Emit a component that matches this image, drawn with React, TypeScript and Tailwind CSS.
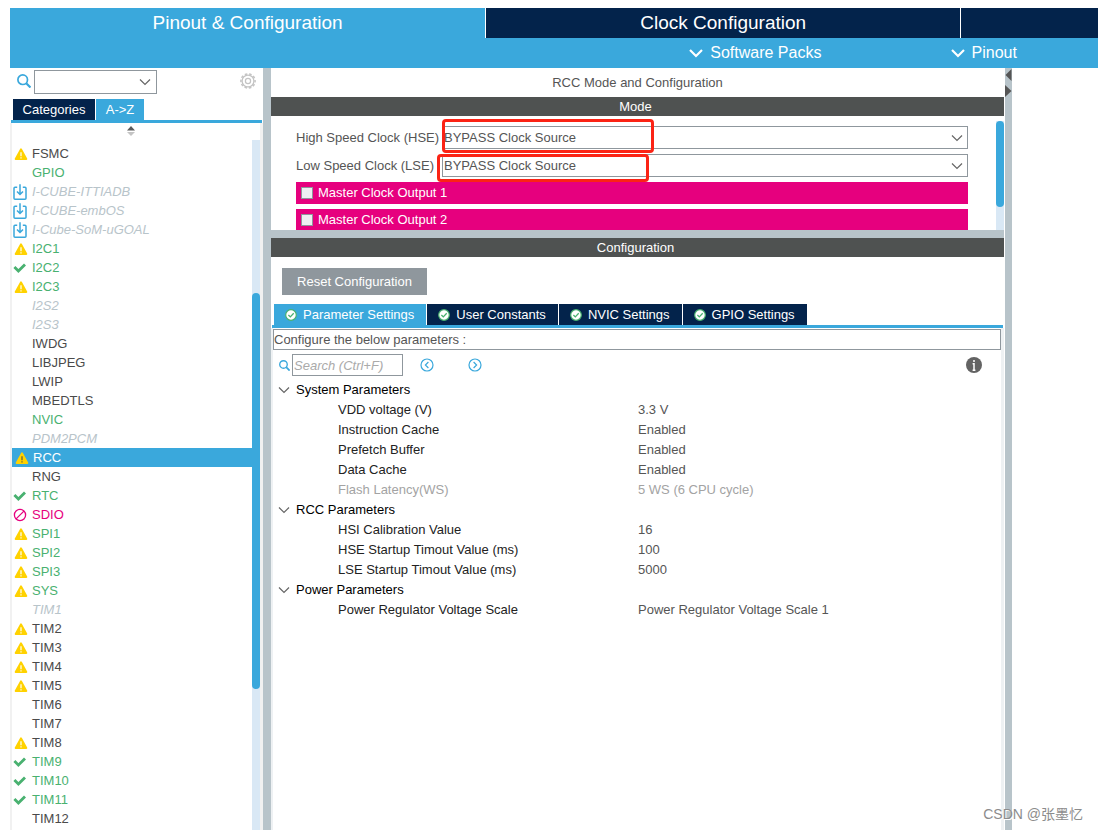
import { useState } from "react";
import type { ReactNode } from "react";
import clsx from "clsx";

type Status = "warn" | "ok" | "pack" | "blocked";
type Tone = "dark" | "green" | "muted" | "pink";

type Peripheral = {
  name: string;
  tone: Tone;
  status?: Status;
};

const PERIPHERALS: Peripheral[] = [
  { name: "FSMC", tone: "dark", status: "warn" },
  { name: "GPIO", tone: "green" },
  { name: "I-CUBE-ITTIADB", tone: "muted", status: "pack" },
  { name: "I-CUBE-embOS", tone: "muted", status: "pack" },
  { name: "I-Cube-SoM-uGOAL", tone: "muted", status: "pack" },
  { name: "I2C1", tone: "green", status: "warn" },
  { name: "I2C2", tone: "green", status: "ok" },
  { name: "I2C3", tone: "green", status: "warn" },
  { name: "I2S2", tone: "muted" },
  { name: "I2S3", tone: "muted" },
  { name: "IWDG", tone: "dark" },
  { name: "LIBJPEG", tone: "dark" },
  { name: "LWIP", tone: "dark" },
  { name: "MBEDTLS", tone: "dark" },
  { name: "NVIC", tone: "green" },
  { name: "PDM2PCM", tone: "muted" },
  { name: "RCC", tone: "dark", status: "warn" },
  { name: "RNG", tone: "dark" },
  { name: "RTC", tone: "green", status: "ok" },
  { name: "SDIO", tone: "pink", status: "blocked" },
  { name: "SPI1", tone: "green", status: "warn" },
  { name: "SPI2", tone: "green", status: "warn" },
  { name: "SPI3", tone: "green", status: "warn" },
  { name: "SYS", tone: "green", status: "warn" },
  { name: "TIM1", tone: "muted" },
  { name: "TIM2", tone: "dark", status: "warn" },
  { name: "TIM3", tone: "dark", status: "warn" },
  { name: "TIM4", tone: "dark", status: "warn" },
  { name: "TIM5", tone: "dark", status: "warn" },
  { name: "TIM6", tone: "dark" },
  { name: "TIM7", tone: "dark" },
  { name: "TIM8", tone: "dark", status: "warn" },
  { name: "TIM9", tone: "green", status: "ok" },
  { name: "TIM10", tone: "green", status: "ok" },
  { name: "TIM11", tone: "green", status: "ok" },
  { name: "TIM12", tone: "dark" },
];

const TONES: Record<Tone, string> = {
  dark: "text-[#4a4a4a]",
  green: "text-[#49b170]",
  muted: "text-[#b8c4ca] italic",
  pink: "text-[#e6007e]",
};

type Param = { name: string; value: string; disabled?: boolean };

const GROUPS: { title: string; params: Param[] }[] = [
  {
    title: "System Parameters",
    params: [
      { name: "VDD voltage (V)", value: "3.3 V" },
      { name: "Instruction Cache", value: "Enabled" },
      { name: "Prefetch Buffer", value: "Enabled" },
      { name: "Data Cache", value: "Enabled" },
      { name: "Flash Latency(WS)", value: "5 WS (6 CPU cycle)", disabled: true },
    ],
  },
  {
    title: "RCC Parameters",
    params: [
      { name: "HSI Calibration Value", value: "16" },
      { name: "HSE Startup Timout Value (ms)", value: "100" },
      { name: "LSE Startup Timout Value (ms)", value: "5000" },
    ],
  },
  {
    title: "Power Parameters",
    params: [{ name: "Power Regulator Voltage Scale", value: "Power Regulator Voltage Scale 1" }],
  },
];

const SETTINGS_TABS = ["Parameter Settings", "User Constants", "NVIC Settings", "GPIO Settings"];

function SearchIcon({ className }: { className: string }) {
  return (
    <svg viewBox="0 0 14 14" className={className} fill="none" stroke="#3aa8dc">
      <circle cx="5.7" cy="5.7" r="4.8" strokeWidth="1.7" />
      <path d="M9.2 9.2l4.3 4.3" strokeWidth="2.2" />
    </svg>
  );
}

function GearIcon() {
  return (
    <svg viewBox="0 0 16 16" className="size-4" fill="none" stroke="#c4c4c4">
      <circle cx="8" cy="8" r="5.9" strokeWidth="1.3" />
      <circle cx="8" cy="8" r="7.1" strokeWidth="1.5" strokeDasharray="2.6 1.861" strokeDashoffset="1.3" />
      <circle cx="8" cy="8" r="2.6" strokeWidth="1.2" />
    </svg>
  );
}

function ChevronDown({ className }: { className: string }) {
  return (
    <svg viewBox="0 0 12 8" className={className} fill="none" stroke="currentColor" strokeWidth="1.2">
      <path d="M1 1.5l5 5 5-5" />
    </svg>
  );
}

function StatusIcon({ status, selected }: { status?: Status; selected: boolean }) {
  if (status === "warn") {
    return (
      <svg viewBox="0 0 14 14" className="ml-px size-[14px]">
        <path d="M7 2.2L12.4 12H1.6z" fill="#ffd200" stroke="#ffd200" strokeWidth="1.8" strokeLinejoin="round" />
        <path d="M7 5.2v4M7 10.2v1.4" stroke={selected ? "#5c5c3a" : "#fff"} strokeWidth="1.2" />
      </svg>
    );
  }
  if (status === "ok") {
    return (
      <svg viewBox="0 0 14 14" className="size-[14px]" fill="none" stroke="#49b170">
        <path d="M1.4 6l4 4.1L12 3.4" strokeWidth="2.8" />
      </svg>
    );
  }
  if (status === "pack") {
    return (
      <svg viewBox="0 0 14 16" className="h-4 w-[14px]" fill="none" stroke="#3aa8dc" strokeWidth="1.5">
        <path d="M4.2 3.2H2q-1 0-1 1v10q0 1 1 1h10q1 0 1-1v-10q0-1-1-1H9.8" />
        <path d="M7 .3v9.8M4 7.4l3 3.1 3-3.1" />
      </svg>
    );
  }
  if (status === "blocked") {
    return (
      <svg viewBox="0 0 14 14" className="size-[14px]" fill="none" stroke="#e6007e" strokeWidth="1.3">
        <circle cx="7" cy="7" r="5.6" />
        <path d="M3.1 10.9l7.8-7.8" />
      </svg>
    );
  }
  return null;
}

function TabCheck() {
  return (
    <svg viewBox="0 0 12 12" className="size-3">
      <circle cx="6" cy="6" r="5.3" fill="#fff" stroke="#49b170" strokeWidth="1.2" />
      <path d="M3.4 6l1.9 1.9 3.4-3.6" fill="none" stroke="#49b170" strokeWidth="1.3" />
    </svg>
  );
}

function StepIcon({ d }: { d: string }) {
  return (
    <svg viewBox="0 0 14 14" className="size-[14px]" fill="none" stroke="#3aa8dc" strokeWidth="1.2">
      <circle cx="7" cy="7" r="6" />
      <path d={d} />
    </svg>
  );
}

function SectionBar({ children }: { children: ReactNode }) {
  return <h2 className="h-[19px] shrink-0 bg-[#4f5251] pr-1 text-center leading-[19px] text-white">{children}</h2>;
}

function Header() {
  return (
    <header className="ml-[10px] mt-2 flex h-[60px] shrink-0 flex-col bg-[#3aa8dc] text-white">
      <nav className="flex h-[30px] text-[19px]">
        <button type="button" className="flex-[476] bg-[#3aa8dc]">Pinout &amp; Configuration</button>
        <button type="button" className="flex-[475] border-l border-white bg-[#03234b]">Clock Configuration</button>
        <div className="flex-[137] border-l border-white bg-[#03234b]" />
      </nav>
      <div className="flex h-[30px] justify-end text-base">
        {["Software Packs", "Pinout"].map((label) => (
          <button key={label} type="button" className="flex w-[21%] items-center justify-center gap-[7px]">
            <svg viewBox="0 0 14 10" className="h-[10px] w-[14px]" fill="none" stroke="currentColor" strokeWidth="2.2">
              <path d="M1 2l6 6 6-6" />
            </svg>
            {label}
          </button>
        ))}
      </div>
    </header>
  );
}

function Sidebar() {
  const [selected, setSelected] = useState("RCC");

  return (
    <aside className="ml-[10px] flex w-[253px] shrink-0 flex-col">
      <div className="flex h-[31px] items-start pl-[7px] pr-[7px] pt-[2px]">
        <SearchIcon className="mt-1 size-[14px]" />
        <label className="relative ml-[3px]">
          <select aria-label="Filter" className="block h-6 w-[123px] appearance-none border border-[#8f979d] bg-white px-1" />
          <ChevronDown className="pointer-events-none absolute right-[6px] top-2 h-2 w-3 text-[#666]" />
        </label>
        <button type="button" aria-label="Settings" className="ml-auto mt-[3px]">
          <GearIcon />
        </button>
      </div>
      <div className="mx-px flex border-b-[3px] border-[#3aa8dc] pl-[2px] text-white">
        <button type="button" className="h-[21px] w-[82px] bg-[#03234b]">Categories</button>
        <button type="button" className="ml-px h-[21px] w-12 bg-[#3aa8dc]">A-&gt;Z</button>
      </div>
      <div className="flex min-h-0 flex-1 flex-col border-x-2 border-[#f1f1f1] border-r-[3px]">
        <button type="button" aria-label="Sort" className="flex h-[17px] shrink-0 justify-center pr-[10px] pt-[3px]">
          <svg viewBox="0 0 8 10" className="h-[10px] w-2">
            <path d="M0 4.5L4 0l4 4.5z" fill="#5a5a5a" />
            <path d="M0 6l4 4 4-4z" fill="#c4c4c4" />
          </svg>
        </button>
        <div className="flex min-h-0 flex-1">
          <ul className="min-w-0 flex-1 overflow-hidden pt-1">
            {PERIPHERALS.map((p) => {
              const active = p.name === selected;
              return (
                <li key={p.name}>
                  <button
                    type="button"
                    onClick={() => setSelected(p.name)}
                    className={clsx(
                      "flex h-[19px] w-full items-center text-left leading-[18px]",
                      active ? "bg-[#3aa8dc] pl-[2px] text-white" : "pl-px",
                      !active && TONES[p.tone]
                    )}
                  >
                    <span className="w-[19px]">
                      <StatusIcon status={p.status} selected={active} />
                    </span>
                    {p.name}
                  </button>
                </li>
              );
            })}
          </ul>
          <div className="flex w-2 flex-col bg-[#d9e8f5]">
            <div className="flex-[153]" />
            <div className="flex-[396] rounded-full bg-[#3aa8dc]" />
            <div className="flex-[141]" />
          </div>
        </div>
      </div>
    </aside>
  );
}

type ClockSelectProps = { id: string; label: string; markClass: string };

function ClockSelect({ id, label, markClass }: ClockSelectProps) {
  return (
    <div className="flex items-center">
      <label htmlFor={id} className="w-[146px] whitespace-nowrap">{label}</label>
      <div className="relative flex-1">
        <select id={id} className="block h-[23px] w-full appearance-none border border-[#8f979d] bg-white px-px">
          <option>BYPASS Clock Source</option>
          <option>Disable</option>
        </select>
        <ChevronDown className="pointer-events-none absolute right-[5px] top-2 h-2 w-3 text-[#666]" />
        <div className={clsx("pointer-events-none absolute w-[212px] rounded-sm border-[3px] border-[#fb2315]", markClass)} />
      </div>
    </div>
  );
}

function ModePanel() {
  return (
    <section className="flex h-[133px] shrink-0 flex-col">
      <SectionBar>Mode</SectionBar>
      <div className="flex min-h-0 flex-1">
        <div className="flex flex-1 flex-col gap-[5px] overflow-hidden pl-[25px] pr-7 pt-[10px]">
          <ClockSelect id="hse" label="High Speed Clock (HSE)" markClass="-top-[7px] left-0 h-[34px]" />
          <ClockSelect id="lse" label="Low Speed Clock (LSE)" markClass="top-0 -left-[5px] h-7" />
          {["Master Clock Output 1", "Master Clock Output 2"].map((label) => (
            <label key={label} className="flex h-[22px] shrink-0 items-center gap-[5px] bg-[#e6007e] pl-[5px] text-white">
              <input type="checkbox" className="size-3 appearance-none border border-[#8f979d] bg-[#eef0f2] checked:bg-[#3aa8dc]" />
              {label}
            </label>
          ))}
        </div>
        <div className="mt-[5px] flex w-2 flex-col bg-[#d9e8f5]">
          <div className="h-[86px] rounded-full bg-[#3aa8dc]" />
        </div>
      </div>
    </section>
  );
}

function ParameterTable() {
  const [closed, setClosed] = useState<string[]>([]);

  const toggle = (title: string) =>
    setClosed((prev) => (prev.includes(title) ? prev.filter((t) => t !== title) : [...prev, title]));

  return (
    <table className="mt-1 w-full table-fixed border-collapse leading-5">
      <colgroup>
        <col className="w-[365px]" />
        <col />
      </colgroup>
      {GROUPS.map((group) => (
        <tbody key={group.title}>
          <tr>
            <th colSpan={2} className="p-0 text-left font-normal text-black">
              <button
                type="button"
                onClick={() => toggle(group.title)}
                className="flex h-5 items-center gap-[6px] pl-[5px]"
              >
                <ChevronDown className="h-2 w-3 text-[#666]" />
                {group.title}
              </button>
            </th>
          </tr>
          {!closed.includes(group.title) &&
            group.params.map((p) => (
              <tr key={p.name} className={p.disabled ? "text-[#a3a3a3]" : "text-[#555]"}>
                <td className={clsx("h-5 p-0 pl-[65px]", !p.disabled && "text-[#222]")}>{p.name}</td>
                <td className="h-5 p-0">{p.value}</td>
              </tr>
            ))}
        </tbody>
      ))}
    </table>
  );
}

function ConfigurationPanel() {
  const [tab, setTab] = useState(SETTINGS_TABS[0]);

  return (
    <section className="flex min-h-0 flex-1 flex-col">
      <SectionBar>Configuration</SectionBar>
      <button type="button" className="ml-[11px] mt-[11px] h-[27px] w-[145px] shrink-0 bg-[#8f979d] text-white">
        Reset Configuration
      </button>
      <div className="ml-px mr-px mt-[9px] flex shrink-0 gap-px border-b-[3px] border-[#3aa8dc] pl-[2px] text-white">
        {SETTINGS_TABS.map((name) => (
          <button
            key={name}
            type="button"
            onClick={() => setTab(name)}
            className={clsx(
              "flex h-[21px] items-center gap-[6px] whitespace-nowrap pl-[11px] pr-3",
              tab === name ? "bg-[#3aa8dc]" : "bg-[#03234b]"
            )}
          >
            <TabCheck />
            {name}
          </button>
        ))}
      </div>
      <div className="flex-1 border-l-2 border-r-[3px] border-[#eef1f3] pt-px">
        <p className="h-[21px] border border-[#8f979d] leading-[19px]">Configure the below parameters :</p>
        <div className="flex items-center pl-[6px] pr-[19px] pt-1">
          <SearchIcon className="size-[11px]" />
          <input
            type="text"
            aria-label="Search"
            placeholder="Search (Ctrl+F)"
            className="ml-[2px] h-[22px] w-[111px] border border-[#8f979d] px-px placeholder:italic placeholder:text-[#aaa]"
          />
          <button type="button" aria-label="Previous" className="ml-[17px]">
            <StepIcon d="M8.4 4L5.4 7l3 3" />
          </button>
          <button type="button" aria-label="Next" className="ml-[34px]">
            <StepIcon d="M5.6 4l3 3-3 3" />
          </button>
          <button type="button" aria-label="Information" className="ml-auto">
            <svg viewBox="0 0 16 16" className="size-4">
              <circle cx="8" cy="8" r="8" fill="#636363" />
              <path d="M8 3v2M6.6 6.7H8v6.6M6.6 13.3h2.8" fill="none" stroke="#fff" strokeWidth="1.5" />
            </svg>
          </button>
        </div>
        <ParameterTable />
      </div>
    </section>
  );
}

export default function App() {
  return (
    <div className="relative flex h-screen flex-col overflow-hidden bg-white font-['Liberation_Sans','Noto_Sans_CJK_SC',sans-serif] text-[13px] text-[#555]">
      <Header />
      <div className="flex min-h-0 flex-1">
        <Sidebar />
        <div className="w-2 shrink-0 bg-[#b8c4ca]" />
        <main className="flex min-w-0 flex-1 flex-col">
          <h1 className="h-[29px] shrink-0 text-center leading-[29px]">RCC Mode and Configuration</h1>
          <ModePanel />
          <div className="h-2 shrink-0 bg-[#b8c4ca]" />
          <ConfigurationPanel />
        </main>
        <div className="ml-px flex w-[7px] shrink-0 flex-col bg-[#b8c4ca] pt-px">
          <svg viewBox="0 0 7 28" className="h-7 w-[7px]" fill="#555">
            <path d="M6.5 0v12L.5 6z" />
            <path d="M0 16v12l6.5-6z" />
          </svg>
        </div>
        <div className="w-[86px] shrink-0" />
      </div>
      <p className="absolute bottom-[6px] right-[15px] text-sm text-[#8c8c8c] [text-shadow:1px_1px_0_#ffffff]">CSDN @张墨忆</p>
    </div>
  );
}
